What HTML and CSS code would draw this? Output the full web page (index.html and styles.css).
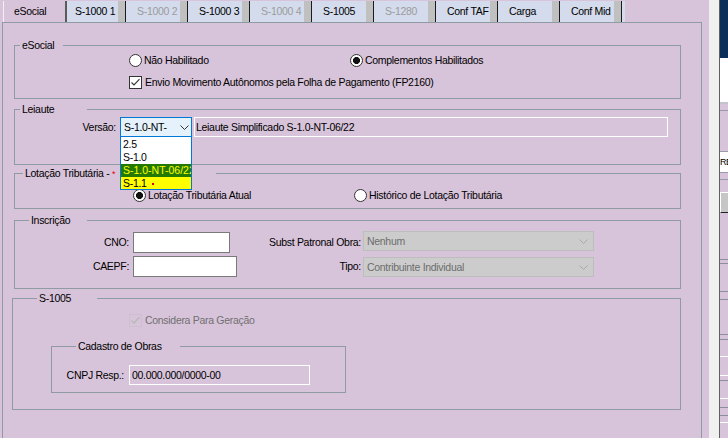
FILE: index.html
```html
<!DOCTYPE html>
<html lang="pt-BR">
<head>
<meta charset="utf-8">
<title>eSocial</title>
<link rel="stylesheet" href="styles.css">
</head>
<body>
<div class="screen">
  <div class="main">
    <div class="tabs">
      <div class="tab tab-active">eSocial</div>
      <div class="tab tab-off">S-1000 1</div>
      <div class="tab tab-off tab-dis">S-1000 2</div>
      <div class="tab tab-off">S-1000 3</div>
      <div class="tab tab-off tab-dis">S-1000 4</div>
      <div class="tab tab-off">S-1005</div>
      <div class="tab tab-off tab-dis">S-1280</div>
      <div class="tab tab-off">Conf TAF</div>
      <div class="tab tab-off">Carga</div>
      <div class="tab tab-off">Conf Mid</div>
    </div>
    <div class="page">
      <fieldset class="grp g1">
        <legend class="lg lg1">eSocial</legend>
        <div class="opt-row row-a">
          <label class="opt opt-first"><span class="radio"></span><span>Não Habilitado</span></label>
          <label class="opt"><span class="radio on"></span><span>Complementos Habilitados</span></label>
        </div>
        <div class="opt-row row-a row-gap">
          <label class="opt opt-chk"><span class="check"><svg width="11" height="11" viewBox="0 0 11 11"><polyline points="1.5,5.5 4,8 9.5,2.2" fill="none" stroke="#333" stroke-width="1.1"/></svg></span><span>Envio Movimento Autônomos pela Folha de Pagamento (FP2160)</span></label>
        </div>
      </fieldset>

      <fieldset class="grp g2">
        <legend class="lg lg2">Leiaute</legend>
        <div class="lei-row">
          <span class="lbl lbl-versao">Versão:</span>
          <div class="combo">
            <span class="combo-text">S-1.0-NT-</span>
            <svg class="chev" width="9" height="5" viewBox="0 0 9 5"><polyline points="0.5,0.5 4.5,4.5 8.5,0.5" fill="none" stroke="#333" stroke-width="1"/></svg>
            <div class="dropdown">
              <div class="dd-item">2.5</div>
              <div class="dd-item">S-1.0</div>
              <div class="dd-item dd-sel">S-1.0-NT-06/22</div>
              <div class="dd-item dd-yel">S-1.1<span class="reddot"></span></div>
            </div>
          </div>
          <div class="lei-desc">Leiaute Simplificado S-1.0-NT-06/22</div>
        </div>
      </fieldset>

      <fieldset class="grp g3">
        <legend class="lg lg3">Lotação Tributária - <span class="req">*</span></legend>
        <div class="opt-row row-b">
          <label class="opt opt-first"><span class="radio on"></span><span>Lotação Tributária Atual</span></label>
          <label class="opt"><span class="radio"></span><span>Histórico de Lotação Tributária</span></label>
        </div>
      </fieldset>

      <fieldset class="grp g4">
        <legend class="lg lg4">Inscrição</legend>
        <div class="ins-row">
          <span class="lbl ins-lbl1">CNO:</span>
          <div class="inp inp-cno"></div>
          <span class="lbl ins-lbl2 ins-lbl2a">Subst Patronal Obra:</span>
          <div class="sel sel-up"><span>Nenhum</span><svg class="chev" width="9" height="5" viewBox="0 0 9 5"><polyline points="0.5,0.5 4.5,4.5 8.5,0.5" fill="none" stroke="#a9a9a9" stroke-width="1"/></svg></div>
        </div>
        <div class="ins-row ins-gap">
          <span class="lbl ins-lbl1">CAEPF:</span>
          <div class="inp inp-caepf"></div>
          <span class="lbl ins-lbl2 ins-lbl2b">Tipo:</span>
          <div class="sel sel-down"><span>Contribuinte Individual</span><svg class="chev" width="9" height="5" viewBox="0 0 9 5"><polyline points="0.5,0.5 4.5,4.5 8.5,0.5" fill="none" stroke="#a9a9a9" stroke-width="1"/></svg></div>
        </div>
      </fieldset>

      <fieldset class="grp g5">
        <legend class="lg lg5">S-1005</legend>
        <div class="opt-row row-c">
          <label class="opt opt-chk dis"><span class="check check-dis"><svg width="11" height="11" viewBox="0 0 11 11"><polyline points="1.5,5.5 4,8 9.5,2.2" fill="none" stroke="#b8b8b8" stroke-width="1.3"/></svg></span><span>Considera Para Geração</span></label>
        </div>
        <fieldset class="grp g6">
          <legend class="lg lg6">Cadastro de Obras</legend>
          <div class="cnpj-row">
            <span class="lbl cnpj-lbl">CNPJ Resp.:</span>
            <div class="cnpj-inp">00.000.000/0000-00</div>
          </div>
        </fieldset>
      </fieldset>
    </div>
  </div>
  <div class="strip"></div>
  <div class="side">
    <div class="sd-navy"></div>
    <div class="sd-white"></div>
    <div class="sd-mid"></div>
    <div class="sd-row">RE</div>
    <div class="sd-mid2"></div>
    <div class="sd-btn"></div>
    <div class="sd-lower"></div>
  </div>
</div>
</body>
</html>
```
FILE: styles.css
```css
* { box-sizing: border-box; }
html, body { margin: 0; padding: 0; }
body {
  width: 728px;
  height: 438px;
  overflow: hidden;
  background: #d8c4da;
  font-family: "Liberation Sans", Arial, sans-serif;
  font-size: 10.5px;
  letter-spacing: -0.3px;
  color: #000;
}
.screen { display: flex; width: 728px; height: 438px; }
.main { width: 709px; flex: none; }

/* tabs */
.tabs { display: flex; height: 22px; padding-left: 3px; padding-top: 1px; }
.tab { height: 21px; line-height: 21px; white-space: nowrap; flex: none; }
.tab-active {
  width: 64px;
  padding-left: 10px;
  background: #d8c4da;
  border-left: 1px solid #f4eef5;
  border-right: 2px solid #5b5b5b;
}
.tab-off {
  width: 62px;
  padding-left: 8px;
  background: linear-gradient(to right, #d3dbec 0 51px, #c0c0c0 51px 58px, #1c1c1c 58px 59px, #d3dbec 59px);
}
.tab-dis { color: #9c9c9c; }

/* page frame */
.page {
  margin-left: 2px;
  width: 700px;
  height: 416px;
  border: 1px solid #8f9ba3;
  border-bottom: 0;
}

/* group boxes */
fieldset.grp {
  margin: 0 0 0 11px;
  padding: 0;
  width: 667px;
  min-width: 0;
  border: 1px solid #8f9ba3;
}
legend.lg {
  padding: 0 0 0 2px;
  margin-left: 5px;
  height: 13px;
  line-height: 13px;
  white-space: nowrap;
}
legend.lg1 { width: 43px; }
legend.lg2 { width: 67px; }
legend.lg3 { width: 193px; margin-left: 8px; }
legend.lg4 { width: 58px; margin-left: 14px; }
legend.lg5 { width: 60px; margin-left: 24px; }
legend.lg6 { width: 104px; margin-left: 24px; }
.req { color: #e00000; font-size: 9px; }

fieldset.g1 { margin-top: 16px; padding: 0 0 8px; }
fieldset.g2 { margin-top: 4px; padding: 1px 0 27px; }
fieldset.g3 { margin-top: 2px; padding: 7px 0 5px; }
fieldset.g4 { margin-top: 5px; padding: 5px 0 11px; }
fieldset.g5 { margin-top: 3px; margin-left: 9px; width: 669px; padding: 7px 0 16px; }
fieldset.g6 { margin: 12px 0 0 38px; width: 295px; padding: 12px 0 7px; }

/* option rows */
.opt-row { display: flex; align-items: center; height: 16px; }
.row-a { padding-left: 114px; }
.row-b { padding-left: 118px; }
.row-c { padding-left: 116px; }
.row-gap { margin-top: 6px; }
.opt { display: flex; align-items: center; gap: 2px; white-space: nowrap; }
.opt-first { width: 221px; flex: none; }
.opt-chk { gap: 3px; }
.dis { color: #707070; }

.radio {
  width: 13px;
  height: 13px;
  border: 1px solid #333;
  border-radius: 50%;
  background: #fff;
  flex: none;
}
.radio.on { background: radial-gradient(circle, #111 0 3.2px, #fff 3.8px); }
.check {
  width: 13px;
  height: 13px;
  border: 1px solid #333;
  background: #fff;
  flex: none;
  display: flex;
}
.check-dis { border-color: #cdbfcf; background: transparent; }

/* leiaute row */
.lei-row { display: flex; height: 20px; }
.lbl { white-space: nowrap; text-align: right; flex: none; }
.lbl-versao { width: 101px; margin-right: 4px; line-height: 20px; }
.combo {
  position: relative;
  width: 72px;
  height: 20px;
  flex: none;
  border: 1px solid #0078d7;
  background: #e5f1fb;
  padding-left: 3px;
  padding-right: 2px;
  display: flex;
  align-items: center;
}
.combo-text { flex: 1; }
.chev { flex: none; }
.dropdown {
  position: absolute;
  top: 19px;
  left: -1px;
  width: 72px;
  border: 1px solid #0078d7;
  border-top: 0;
  background: #fff;
  padding-top: 1px;
  z-index: 5;
}
.dd-item {
  height: 13px;
  line-height: 13px;
  padding-left: 2px;
  white-space: nowrap;
  overflow: hidden;
}
.dd-sel { background: #247a00; color: #ffff00; letter-spacing: 0; }
.dd-yel { background: #ffff00; height: 12px; line-height: 12px; }
.reddot {
  display: inline-block;
  width: 2px;
  height: 2px;
  background: #e00000;
  margin-left: 5px;
  vertical-align: middle;
}
.lei-desc {
  margin-left: 2px;
  width: 474px;
  height: 20px;
  border: 1px solid #fff;
  padding-left: 1px;
  line-height: 18px;
  white-space: nowrap;
}

/* inscricao */
.ins-row { display: flex; align-items: flex-start; height: 21px; }
.ins-gap { margin-top: 3px; }
.ins-lbl1 { width: 118px; padding-right: 4px; line-height: 21px; }
.inp { height: 21px; border: 1px solid #7a7a7a; background: #fff; flex: none; }
.inp-cno { width: 97px; }
.inp-caepf { width: 104px; }
.ins-lbl2 { padding-right: 2px; line-height: 20px; }
.ins-lbl2a { width: 133px; }
.ins-lbl2b { width: 126px; }
.sel {
  width: 231px;
  height: 20px;
  flex: none;
  background: #cccccc;
  border: 1px solid #bdbdbd;
  color: #6d6d6d;
  display: flex;
  align-items: center;
  justify-content: space-between;
  padding-left: 3px;
  padding-right: 5px;
}
.sel-up { margin-top: -1px; }
.sel-down { margin-top: 1px; }

/* cnpj */
.cnpj-row { display: flex; height: 20px; }
.cnpj-lbl { width: 77px; padding-right: 5px; line-height: 20px; }
.cnpj-inp {
  width: 181px;
  height: 20px;
  border: 1px solid #fff;
  padding-left: 2px;
  line-height: 18px;
  white-space: nowrap;
}

/* neighbouring window */
.strip { width: 10px; flex: none; background: #f0f0f0; }
.side {
  width: 9px;
  flex: none;
  border-left: 1px solid #5f5f5f;
  background: #d8c4da;
  display: flex;
  flex-direction: column;
  overflow: hidden;
}
.sd-navy { height: 58px; background: #0b2f58; flex: none; }
.sd-white { height: 44px; background: #fff; flex: none; }
.sd-mid {
  height: 50px;
  flex: none;
  border-top: 2px solid #c4c4cc;
  background: linear-gradient(to bottom, transparent 0 6px, #9a9aa8 6px 7px, transparent 7px 47px, #9a9aa8 47px 48px);
}
.sd-row {
  height: 21px;
  flex: none;
  background: #fff;
  border-bottom: 1px solid #9a9aa8;
  line-height: 21px;
  font-size: 9px;
  letter-spacing: -0.5px;
  white-space: nowrap;
  overflow: hidden;
}
.sd-mid2 {
  height: 19px;
  flex: none;
  background: linear-gradient(to bottom, transparent 0 6px, #9a9aa8 6px 7px, transparent 7px);
}
.sd-btn {
  height: 21px;
  flex: none;
  background: #c6c6c6;
  border-top: 1px solid #fff;
  border-left: 1px solid #fff;
  border-bottom: 1px solid #222;
}
.sd-lower {
  flex: 1;
  background: linear-gradient(to bottom,
    transparent 0 46px, #8d8d9c 46px 47px, transparent 47px 50px, #8d8d9c 50px 51px,
    transparent 51px 78px, #8d8d9c 78px 79px, transparent 79px 86px, #8d8d9c 86px 87px,
    transparent 87px 121px, #8d8d9c 121px 122px, transparent 122px 126px, #8d8d9c 126px 127px,
    transparent 127px 143px, #ffffff 143px 144px, transparent 144px 162px, #ffffff 162px 163px,
    transparent 163px 167px, #8d8d9c 167px 168px, transparent 168px 185px, #ffffff 185px 186px,
    transparent 186px 194px, #8d8d9c 194px 195px, transparent 195px 202px, #8d8d9c 202px 203px,
    transparent 203px 209px, #ffffff 209px 210px, transparent 210px);
}
```
